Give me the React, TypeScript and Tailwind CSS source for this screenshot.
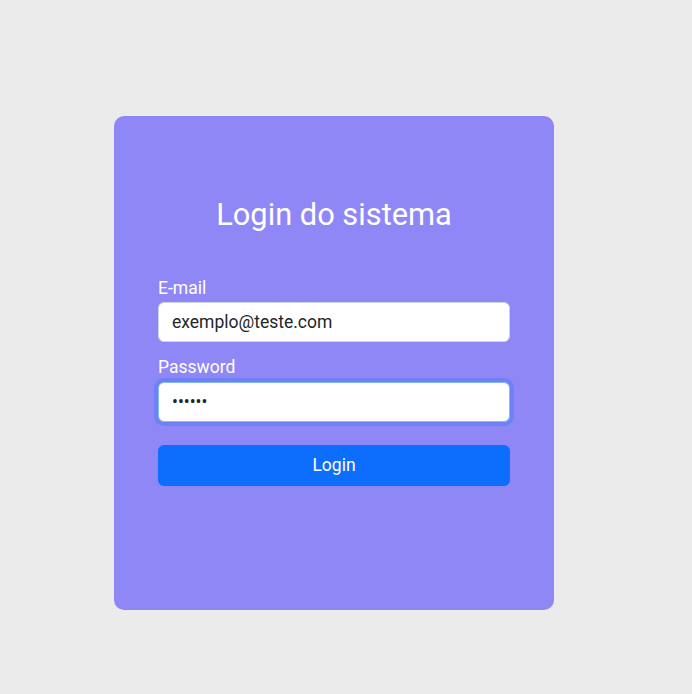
import { useEffect, useRef } from 'react';

export default function App() {
  const pwdRef = useRef<HTMLInputElement>(null);

  useEffect(() => {
    const el = pwdRef.current;
    if (el) {
      el.focus();
      el.setSelectionRange(el.value.length, el.value.length);
    }
  }, []);

  return (
    <div
      className="min-h-screen w-full bg-[#ebebeb] pt-[116px] pl-[114px]"
      style={{ fontFamily: 'Roboto, "Liberation Sans", sans-serif' }}
    >
      <div className="w-[440px] h-[494px] rounded-[10px] bg-[#9087f6] px-[44px] pt-[80px]">
        <h2 className="text-center text-[30.8px] leading-[38px] font-normal text-white">Login do sistema</h2>

        <form className="mt-[41px]" onSubmit={(e) => e.preventDefault()}>
          <label htmlFor="email" className="block text-white text-[17.5px] leading-[26px] mb-px">
            E-mail
          </label>
          <input
            id="email"
            type="email"
            defaultValue="exemplo@teste.com"
            className="block w-full h-10 rounded-[6px] border border-[#ced4da] bg-white px-[13px] text-[17.5px] text-[#212529] outline-none"
          />

          <label htmlFor="password" className="block text-white text-[17.5px] leading-[26px] mt-[12px] mb-[2px]">
            Password
          </label>
          <input
            ref={pwdRef}
            id="password"
            type="password"
            defaultValue="123456"
            className="block w-full h-10 rounded-[6px] border border-[#86b7fe] bg-white px-[13px] text-[17.5px] text-[#212529] caret-black outline-none shadow-[0_0_0_4px_rgba(13,110,253,0.25)]"
          />

          <button
            type="submit"
            className="mt-[23px] block w-full h-[41px] rounded-[6px] bg-[#0d6efd] text-white text-[17.5px]"
          >
            Login
          </button>
        </form>
      </div>
    </div>
  );
}
